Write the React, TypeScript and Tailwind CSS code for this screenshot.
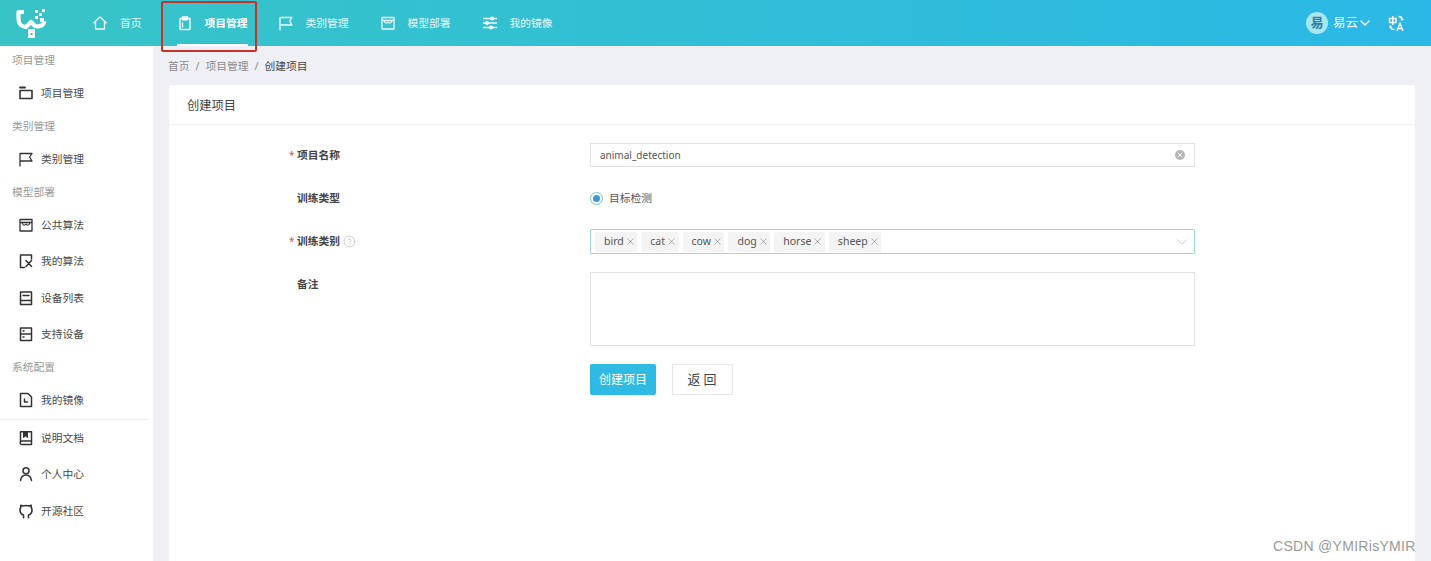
import React from "react";
import { ChevronDown, X, CircleHelp } from "lucide-react";

const S = ({ children, w = 16 }: { children: React.ReactNode; w?: number }) => (
  <svg width={w} height={w} viewBox="0 0 16 16" fill="none" stroke="currentColor" strokeWidth={1.3} strokeLinejoin="round" strokeLinecap="round">
    {children}
  </svg>
);

const Home = () => <S><path d="M1.8 7.8 8 2l6.2 5.8M3.5 6.5V14h9V6.5" /></S>;
const Clip = () => <S><path d="M3 3.5h10V14.5H3zM5.5 1.8h5v3h-5z" /><path d="M5.500 8v4" /></S>;
const Flag = () => <S><path d="M2 15V2.5h12L11.6 6l2.4 4H2" /></S>;
const Store = () => <S><path d="M2 2.5h12v11.500H2zM2 5.500h12" /><path d="M4.500 5.500v1.500c1 1.500 2.500 1.500 3.500 0 1 1.500 2.500 1.500 3.500 0V5.500" strokeWidth={1.100} /></S>;
const Sliders = () => (
  <S>
    <path d="M1.500 3.500h13M1.500 8h13M1.500 12.500h13" />
    <circle cx="10" cy="3.500" r="1.400" fill="currentColor" />
    <circle cx="5" cy="8" r="1.400" fill="currentColor" />
    <circle cx="9" cy="12.500" r="1.400" fill="currentColor" />
  </S>
);
const Folder = () => <S><path d="M2 2.500h5" strokeWidth={1.800} /><path d="M2 5.500h12v8H2z" strokeWidth={1.600} /></S>;
const Algo = () => <S><path d="M13.500 6V2H2.500v12.500h4" strokeWidth={1.500} /><path d="m8 7.500 5.500 6M13.500 7.500 8 13.500" strokeWidth={1.500} /></S>;
const ListDoc = () => <S><path d="M2.500 2h11v12.500h-11zM5 5.500h6M2.500 10.500h11" strokeWidth={1.500} /></S>;
const Rack = () => <S><path d="M2.500 2h11v12.500h-11zM2.500 8h11M5 5h1M5 11h1" strokeWidth={1.500} /></S>;
const Img = () => <S><path d="M2.500 1.500h7.500l3.500 3.500v9.500h-11z" strokeWidth={1.500} /><path d="M6.500 7v3h3" strokeWidth={1.500} /></S>;
const Book = () => <S><path d="M2.500 12V1.800h11v12.700h-9.500a1.500 1.500 0 0 1 0-3.500h9.500" strokeWidth={1.500} /><path d="M5.500 2v5.500l2-1.500 2 1.500V2" fill="currentColor" strokeWidth={1} /></S>;
const User = () => <S><circle cx="8" cy="4.800" r="3" strokeWidth={1.500} /><path d="M2.500 14.500c.5-3.200 2.800-5.500 5.500-5.500s5 2.300 5.500 5.500" strokeWidth={1.500} /></S>;
const Github = () => <S><path d="M5.500 14.800v-2.800c-1.800-.5-3.500-2-3.500-5 0-1 .3-2 .8-2.600L2.800 2.200 5 3c1.900-.6 4.100-.6 6 0l2.200-.8-.1 2.200c.6.600.9 1.600.9 2.600 0 3-1.700 4.500-3.500 5v2.800" strokeWidth={1.600} /></S>;

const Logo = () => (
  <svg width="32" height="30" viewBox="0 0 32 30">
    <path d="M9 4H3.500v7c0 5 3.500 8 7.500 8l5-5 4 4c4 1 8.500 0 9.500-5" fill="none" stroke="white" strokeWidth={4.200} strokeLinejoin="round" />
    <rect x="13" y="21" width="7" height="9" rx="1" fill="white" />
    <rect x="15.500" y="25" width="2" height="2" fill="#38c4c6" />
    <g fill="white">
      <rect x="20" y="2" width="3" height="3" />
      <rect x="24" y="5" width="3" height="3" />
      <rect x="27" y="1" width="3" height="3" />
      <rect x="20" y="8" width="3" height="3" />
      <rect x="25" y="10" width="4" height="4" />
    </g>
  </svg>
);

const Translate = () => (
  <svg width="17" height="17" viewBox="0 0 17 17" fill="none" stroke="white" strokeWidth={1.400}>
    <path d="M1.500 3.500h6.500v4h-6.500zM4.750 1v9" />
    <path d="M10.500 1.500c2 0 3.500 1 3.500 3M13 3.500l1 1.500 1.200-1.200" />
    <path d="M6.500 14.500c-2.500 0-4-1-4-3M3.500 12.500l-1-1.500-1.200 1.200" />
    <path d="m9 16 3-7.500 3 7.500M10 13.500h4" />
  </svg>
);

const NavItem = ({ icon, label, active, cls }: { icon: React.ReactNode; label: string; active?: boolean; cls: string }) => (
  <div className={`relative flex h-[46px] items-center ${cls} ${active ? "w-[71px] font-bold text-white" : "text-white/90"}`}>
    <span className="flex w-[28px] shrink-0 items-center">{icon}</span>
    <span className="whitespace-nowrap text-[10.750px]">{label}</span>
    {active && <span className="absolute bottom-0 left-0 h-[2px] w-full bg-white" />}
  </div>
);

const Section = ({ children }: { children: string }) => (
  <div className="flex h-[29.500px] items-center pl-3 text-[10.750px] text-[#999]">{children}</div>
);

const Item = ({ icon, label }: { icon: React.ReactNode; label: string }) => (
  <div className="flex h-[36.500px] items-center pl-[18px] text-[10.750px] text-[#4a4a4a]">
    <span className="flex w-[23px] shrink-0 items-center text-[#333]">{icon}</span>
    <span>{label}</span>
  </div>
);

const Tag = ({ t }: { t: string }) => (
  <span className="flex h-[20px] items-center gap-[1px] rounded-[2px] bg-[#f4f4f4] pl-[9px] pr-[1.500px] text-[10.500px] text-[#555]">
    {t}
    <X size={11} strokeWidth={1.200} className="text-[#777]" />
  </span>
);

const Row = ({ star, label, help, children, cls }: { star?: boolean; label: string; help?: boolean; children: React.ReactNode; cls: string }) => (
  <div className={`flex ${cls}`}>
    <div className="flex w-[421px] shrink-0 items-center pl-[120px] text-[10.750px] font-bold text-[#444]">
      <span className="w-[8px] text-[10px] font-normal text-[#d9534f]">{star ? "*" : ""}</span>
      <span>{label}</span>
      {help && <CircleHelp size={13} strokeWidth={1.100} className="ml-[3px] text-[#aaa]" />}
    </div>
    {children}
  </div>
);

export default function App() {
  return (
    <div className="relative flex h-[561px] w-[1431px] flex-col overflow-hidden bg-[#eff0f6]" style={{ fontFamily: '"Noto Sans","Noto Sans CJK SC",sans-serif' }}>
      <header className="flex h-[46px] shrink-0 items-center bg-gradient-to-r from-[#38c4c6] to-[#2bb8e6] pl-[15px] pr-[26px]">
        <Logo />
        <NavItem cls="ml-[45px]" icon={<Home />} label="首页" />
        <NavItem cls="ml-[35px]" icon={<Clip />} label="项目管理" active />
        <NavItem cls="ml-[30px]" icon={<Flag />} label="类别管理" />
        <NavItem cls="ml-[31px]" icon={<Store />} label="模型部署" />
        <NavItem cls="ml-[31px]" icon={<Sliders />} label="我的镜像" />
        <div className="ml-auto flex items-center text-white">
          <span className="flex h-[22px] w-[22px] items-center justify-center rounded-full bg-[#a8e6f0] text-[13px] font-bold text-[#2c7fa8]">易</span>
          <span className="ml-[5px] text-[12.500px]">易云</span>
          <ChevronDown size={16} strokeWidth={2} className="-ml-px" />
          <span className="ml-[15px] flex"><Translate /></span>
        </div>
      </header>

      <div className="flex min-h-0 flex-1">
        <aside className="w-[153px] shrink-0 bg-white">
          <div className="-mt-px">
            <Section>项目管理</Section>
            <Item icon={<Folder />} label="项目管理" />
            <Section>类别管理</Section>
            <Item icon={<Flag />} label="类别管理" />
            <Section>模型部署</Section>
            <Item icon={<Store />} label="公共算法" />
            <Item icon={<Algo />} label="我的算法" />
            <Item icon={<ListDoc />} label="设备列表" />
            <Item icon={<Rack />} label="支持设备" />
            <Section>系统配置</Section>
            <Item icon={<Img />} label="我的镜像" />
            <div className="h-px w-[148px] bg-[#f0f0f0]" />
            <Item icon={<Book />} label="说明文档" />
            <Item icon={<User />} label="个人中心" />
            <Item icon={<Github />} label="开源社区" />
          </div>
        </aside>

        <main className="flex min-w-0 flex-1 flex-col px-4">
          <div className="flex h-[39px] shrink-0 items-center pt-px text-[10.750px] text-[#8c8c8c]">
            <span className="-ml-px">首页</span>
            <span className="mx-[6px]">/</span>
            <span>项目管理</span>
            <span className="mx-[6px]">/</span>
            <span className="text-[#444]">创建项目</span>
          </div>
          <section className="flex-1 rounded-t-[2px] bg-white">
            <div className="flex h-[40px] items-center border-b border-[#f2f2f2] pl-[18px] pt-[3px] text-[12.250px] text-[#444]">创建项目</div>
            <Row star label="项目名称" cls="mt-[18px] h-[24px]">
              <div className="flex w-[605px] items-center justify-between border border-[#e4e4e4] pl-[9px] pr-[9px] text-[10px] text-[#555]">
                <span>animal_detection</span>
                <span className="flex h-[10px] w-[10px] items-center justify-center rounded-full bg-[#b5b5b5]">
                  <X size={8} strokeWidth={2.500} className="text-white" />
                </span>
              </div>
            </Row>
            <Row label="训练类型" cls="mt-[19px] h-[24px]">
              <div className="flex items-center text-[10.750px] text-[#555]">
                <span className="flex h-[13px] w-[13px] items-center justify-center rounded-full border border-[#7cc0d8]">
                  <span className="h-[7px] w-[7px] rounded-full bg-[#3f97d8]" />
                </span>
                <span className="ml-[6px]">目标检测</span>
              </div>
            </Row>
            <Row star help label="训练类别" cls="mt-[19px] h-[25px]">
              <div className="flex w-[605px] items-center gap-[4px] rounded-[1px] border border-[#9fd8d4] pl-[4px] pr-[3px]">
                <Tag t="bird" />
                <Tag t="cat" />
                <Tag t="cow" />
                <Tag t="dog" />
                <Tag t="horse" />
                <Tag t="sheep" />
                <ChevronDown size={18} strokeWidth={1} className="ml-auto text-[#bbb]" />
              </div>
            </Row>
            <div className="mt-[18px] flex h-[74px]">
              <div className="w-[421px] shrink-0 pl-[128px] pt-[4px] text-[10.750px] font-bold text-[#444]">备注</div>
              <div className="w-[605px] border border-[#e4e4e4]" />
            </div>
            <div className="ml-[421px] mt-[18px] flex">
              <button className="flex h-[31px] w-[66px] items-center justify-center rounded-[2px] bg-[#2fbae3] text-[12px] text-white">创建项目</button>
              <button className="ml-[16px] flex h-[31px] w-[61px] items-center justify-center border border-[#e8e8e8] pl-[2px] text-[13px] tracking-[3px] text-[#444]">返回</button>
            </div>
          </section>
        </main>
      </div>

      <div className="absolute left-[161px] top-[1px] h-[51px] w-[96px] rounded-[2px] border-2 border-[#c9302c]" />
      <div className="absolute left-[1273px] top-[536px] whitespace-nowrap text-[14px] tracking-[0.300px] text-[#9a9a9a]" style={{ fontFamily: '"Liberation Sans",sans-serif' }}>CSDN @YMIRisYMIR</div>
    </div>
  );
}
